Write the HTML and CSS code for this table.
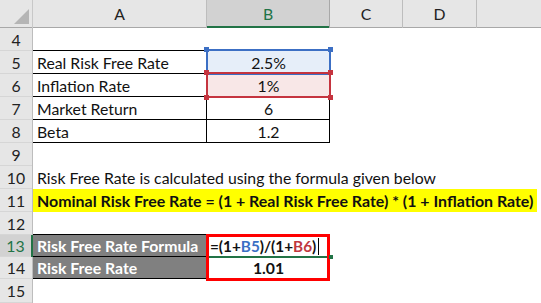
FILE: index.html
```html
<!DOCTYPE html>
<html lang="en">
<head>
    <meta charset="UTF-8">
    <title>Risk Free Rate</title>
    <link rel="stylesheet" href="styles.css">
</head>
<body>
    <div class="sheet">
        <div class="row head">
            <div class="corner"></div>
            <div class="col">A</div>
            <div class="col active">B</div>
            <div class="col">C</div>
            <div class="col">D</div>
            <div class="col last"></div>
        </div>

        <div class="row">
            <div class="num">4</div>
            <div class="cell line-b"></div>
            <div class="cell line-b"></div>
        </div>
        <div class="row">
            <div class="num">5</div>
            <div class="cell box">Real Risk Free Rate</div>
            <div class="cell box center ref ref-blue">
                2.5%
                <span class="dot tl"></span><span class="dot tr"></span>
            </div>
        </div>
        <div class="row">
            <div class="num">6</div>
            <div class="cell box">Inflation Rate</div>
            <div class="cell box center ref ref-red">
                1%
                <span class="dot tl"></span><span class="dot tr"></span>
                <span class="dot bl"></span><span class="dot br"></span>
            </div>
        </div>
        <div class="row">
            <div class="num">7</div>
            <div class="cell box">Market Return</div>
            <div class="cell box center">6</div>
        </div>
        <div class="row">
            <div class="num">8</div>
            <div class="cell box">Beta</div>
            <div class="cell box center">1.2</div>
        </div>
        <div class="row">
            <div class="num">9</div>
        </div>
        <div class="row">
            <div class="num">10</div>
            <div class="cell">Risk Free Rate is calculated using the formula given below</div>
        </div>
        <div class="row">
            <div class="num">11</div>
            <div class="cell highlight">Nominal Risk Free Rate = (1 + Real Risk Free Rate) * (1 + Inflation Rate)</div>
        </div>
        <div class="row">
            <div class="num">12</div>
            <div class="cell line-b"></div>
            <div class="cell line-b"></div>
        </div>
        <div class="row short">
            <div class="num current">13</div>
            <div class="cell box dark">Risk Free Rate Formula</div>
            <div class="cell result editing">
                <span class="fx">=(1+<span class="r-blue">B5</span>)/(1+<span class="r-red">B6</span>)</span><span class="caret"></span>
                <span class="handle"></span>
            </div>
        </div>
        <div class="row short">
            <div class="num">14</div>
            <div class="cell box dark">Risk Free Rate</div>
            <div class="cell center bold">1.01</div>
        </div>
        <div class="row tail">
            <div class="num">15</div>
        </div>
    </div>
</body>
</html>
```

FILE: styles.css
```css
body {
    margin: 0;
    background: #fff;
    font-family: "Lato", "Liberation Sans", sans-serif;
    font-size: 15.8px;
    color: #111;
}

.sheet {
    width: 541px;
    height: 303px;
    overflow: hidden;
}

.row {
    display: grid;
    grid-template-columns: 33px 174px 123px 73px 74px 1fr;
    height: 23px;
    line-height: 23px;
}

.row.short {
    height: 22px;
    line-height: 22px;
}

.row.tail {
    height: 24px;
    line-height: 24px;
}

/* column headers */
.head {
    height: 28px;
    line-height: 27px;
    background: #e6e6e6;
    box-shadow: inset 0 -1px 0 #a8a8a8;
}

.corner {
    position: relative;
    border-right: 1px solid #c8c8c8;
}

.corner::after {
    content: "";
    position: absolute;
    right: 3px;
    bottom: 4px;
    border-style: solid;
    border-width: 0 0 15px 15px;
    border-color: transparent transparent #b5b5b5 transparent;
}

.col {
    text-align: center;
    color: #222;
    border-right: 1px solid #bdbdbd;
}

.col.active {
    background: #d2d2d2;
    color: #217346;
    box-shadow: inset 0 -2px 0 #217346;
    border-right-color: #a8a8a8;
}

.col.last {
    border-right: none;
}

/* row headers */
.num {
    background: #e6e6e6;
    border-right: 1px solid #bdbdbd;
    box-shadow: inset 0 -1px 0 #d6d6d6;
    text-align: center;
    color: #222;
}

.num.current {
    background: #d2d2d2;
    color: #217346;
    border-right: 2px solid #217346;
}

/* cells */
.cell {
    position: relative;
    padding: 0 4px;
    white-space: nowrap;
}

.center {
    text-align: center;
}

.bold {
    font-weight: bold;
}

.line-b {
    box-shadow: inset 0 -1px 0 #000;
}

.box {
    box-shadow: inset -1px -1px 0 #000;
}

.dark {
    background: #808080;
    color: #fff;
    font-weight: bold;
}

.highlight {
    grid-column: 2 / 7;
    margin-right: 4px;
    background: #ffff00;
    font-weight: bold;
    font-size: 15.95px;
}

/* formula reference frames */
.ref::before {
    content: "";
    position: absolute;
    top: -2px;
    left: -1px;
    right: -1px;
    bottom: -1px;
    border: 2px solid;
    z-index: 1;
}

.ref-blue {
    background: #e6eef9;
}

.ref-blue::before {
    border-color: #3c6fc4;
}

.ref-red {
    background: #f8e7e7;
}

.ref-red::before {
    border-color: #c5343f;
}

.dot {
    position: absolute;
    width: 5px;
    height: 5px;
    z-index: 2;
}

.ref-blue .dot {
    background: #3c6fc4;
}

.ref-red .dot {
    background: #c5343f;
}

.dot.tl { top: -4px; left: -3px; }
.dot.tr { top: -4px; right: -3px; }
.dot.bl { bottom: -3px; left: -3px; }
.dot.br { bottom: -3px; right: -3px; }

/* B13:B14 result box */
.result::before {
    content: "";
    position: absolute;
    top: -1px;
    left: -1px;
    width: 118px;
    height: 41px;
    border: 3px solid #ff0000;
    z-index: 2;
}

.editing {
    padding-left: 3px;
    font-weight: bold;
    font-size: 15.3px;
    display: flex;
    align-items: center;
}

.editing::after {
    content: "";
    position: absolute;
    left: 2px;
    right: 0;
    bottom: -1px;
    height: 2px;
    background: #217346;
}

.fx {
    line-height: 22px;
}

.r-blue {
    color: #3a6fc4;
}

.r-red {
    color: #c0373f;
}

.caret {
    display: inline-block;
    width: 1px;
    height: 17px;
    margin-left: 2px;
    background: #000;
}

.handle {
    position: absolute;
    right: -3px;
    bottom: -2px;
    width: 4px;
    height: 4px;
    background: #217346;
    z-index: 3;
}
```
